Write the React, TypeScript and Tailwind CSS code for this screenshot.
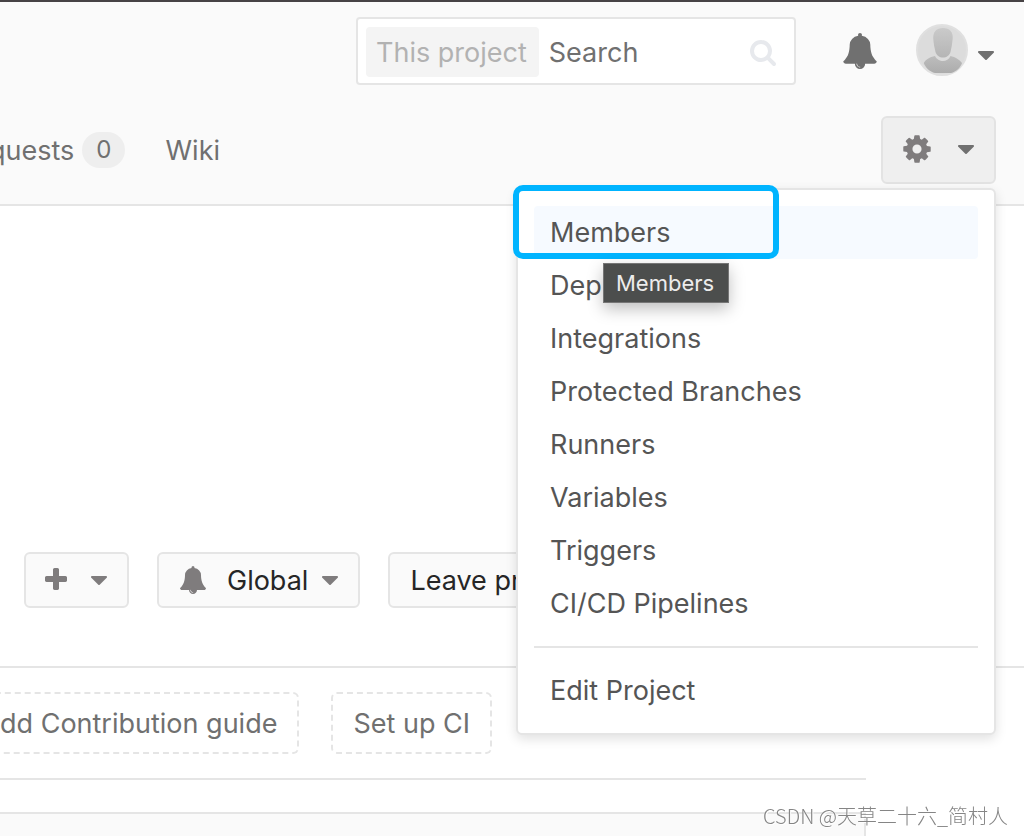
import React from 'react';

const ICONS = {
  bell: 'M912 1696q0-16-16-16-59 0-101.500-42.500t-42.500-101.500q0-16-16-16t-16 16q0 73 51.500 124.500t124.500 51.500q16 0 16-16zm816-288q0 52-38 90t-90 38h-448q0 106-75 181t-181 75-181-75-75-181h-448q-52 0-90-38t-38-90q50-42 91-88t85-119.500 74.500-158.500 50-206 19.500-260q0-152 117-282.500t307-158.500q-8-19-8-39 0-40 28-68t68-28 68 28 28 68q0 20-8 39 190 28 307 158.500t117 282.500q0 139 19.500 260t50 206 74.500 158.500 85 119.500 91 88z',
  cog: 'M1152 896q0-106-75-181t-181-75-181 75-75 181 75 181 181 75 181-75 75-181zm512-109v222q0 12-8 23t-20 13l-185 28q-19 54-39 91 35 50 107 138 10 12 10 25t-9 23q-27 37-99 108t-94 71q-12 0-26-9l-138-108q-44 23-91 38-16 136-29 186-7 28-36 28h-222q-14 0-24.500-8.500t-11.500-21.500l-28-184q-49-16-90-37l-141 107q-10 9-25 9-14 0-25-11-126-114-165-168-7-10-7-23 0-12 8-23 15-21 51-66.500t54-70.500q-27-50-41-99l-183-27q-13-2-21-12.500t-8-23.500v-222q0-12 8-23t19-13l186-28q14-46 39-92-40-57-107-138-10-12-10-24 0-10 9-23 26-36 98.500-107.500t94.500-71.500q13 0 26 10l138 107q44-23 91-38 16-136 29-186 7-28 36-28h222q14 0 24.500 8.500t11.500 21.500l28 184q49 16 90 37l142-107q9-9 24-9 13 0 25 10 129 119 165 170 7 8 7 22 0 12-8 23-15 21-51 66.500t-54 70.500q26 50 41 98l183 28q13 2 21 12.500t8 23.500z',
  caret: 'M1408 704q0 26-19 45l-448 448q-19 19-45 19t-45-19l-448-448q-19-19-19-45t19-45 45-19h896q26 0 45 19t19 45z',
  plus: 'M1600 736v192q0 40-28 68t-68 28h-416v416q0 40-28 68t-68 28h-192q-40 0-68-28t-28-68v-416h-416q-40 0-68-28t-28-68v-192q0-40 28-68t68-28h416v-416q0-40 28-68t68-28h192q40 0 68 28t28 68v416h416q40 0 68 28t28 68z',
  search: 'M1216 832q0-185-131.500-316.500t-316.500-131.500-316.500 131.500-131.500 316.500 131.500 316.500 316.500 131.500 316.500-131.500 131.500-316.500zm512 832q0 52-38 90t-90 38q-54 0-90-38l-343-342q-179 124-399 124-143 0-273.500-55.500t-225-150-150-225-55.500-273.500 55.500-273.500 150-225 225-150 273.500-55.500 273.500 55.500 225 150 150 225 55.500 273.500q0 220-124 399l343 343q37 37 37 90z',
};

const MENU_ITEMS = [
  'Members',
  'Deploy Keys',
  'Integrations',
  'Protected Branches',
  'Runners',
  'Variables',
  'Triggers',
  'CI/CD Pipelines',
];

function Icon({ name, className }: { name: keyof typeof ICONS; className: string }) {
  return (
    <svg viewBox="0 0 1792 1792" fill="currentColor" aria-hidden="true" className={`shrink-0 ${className}`}>
      <path d={ICONS[name]} />
    </svg>
  );
}

function Avatar() {
  return (
    <svg viewBox="0 0 52 52" className="size-[52px]" aria-hidden="true">
      <defs>
        <linearGradient id="head" x1="0" y1="0" x2="0" y2="1">
          <stop offset="0" stopColor="#cacaca" />
          <stop offset="1" stopColor="#b5b5b5" />
        </linearGradient>
        <linearGradient id="body" x1="0" y1="0" x2="0" y2="1">
          <stop offset="0" stopColor="#bdbdbd" />
          <stop offset="1" stopColor="#acacac" />
        </linearGradient>
      </defs>
      <circle cx="26" cy="26" r="25" fill="#dcdcdc" stroke="#e0e0e0" strokeWidth="2" />
      <path
        d="M19 32C14 33 9 36 7.800 39C9 43 14 48 19 49H35C40 48 45 43 46 39C44 36 39 33 34.500 32C33 35.500 30 37 27 37S20.500 35.500 19 32Z"
        fill="url(#body)"
      />
      <path
        d="M27 4C20.500 4 17 8 17.200 14C17.500 19 18.500 24 19.500 28C20.500 31.500 23.500 33.500 27 33.500S33.500 31.500 34.500 28C35.500 24 36.300 19 36.700 14C37 8 33.500 4 27 4Z"
        fill="url(#head)"
      />
    </svg>
  );
}

function SettingsMenu() {
  return (
    <div className="absolute right-0 top-full z-10 mt-1 w-[480px] rounded-md border-2 border-[#e5e5e5] bg-white p-4 shadow-[0_4px_12px_rgba(0,0,0,0.12)]">
      <ul>
        {MENU_ITEMS.map((item, i) => (
          <li key={item}>
            <a
              href="#"
              className={`flex h-[53px] items-center rounded px-4 text-[#555] ${i === 0 ? 'bg-[#f6faff]' : ''}`}
            >
              {item}
            </a>
          </li>
        ))}
      </ul>
      <hr className="my-4 border-t-2 border-[#e5e5e5]" />
      <a href="#" className="flex h-[53px] items-center px-4 text-[#555]">
        Edit Project
      </a>
      <div className="pointer-events-none absolute -left-[5px] -top-[5px] h-[74px] w-[266px] rounded-[10px] border-6 border-[#00b4ff]" />
      <div
        role="tooltip"
        className="absolute left-[85px] top-[73px] flex h-10 w-[126px] items-center border border-[#767676] bg-[#4c4e4d] px-3 text-[22px] text-[#ececec] shadow-[0_6px_16px_rgba(0,0,0,0.25)]"
      >
        Members
      </div>
    </div>
  );
}

export default function App() {
  return (
    <div className="flex min-h-screen flex-col overflow-hidden bg-white font-[Inter,sans-serif] text-[27px] leading-[33px] text-[#707070]">
      <header className="border-b-2 border-t-2 border-b-[#e5e5e5] border-t-[#474345] bg-[#fafafa] pb-5 pr-7 pt-[15px]">
        <div className="flex items-center justify-end">
          <form className="flex h-[68px] w-[440px] items-center rounded border-2 border-[#e5e5e5] bg-white pl-2 pr-[17px] pt-[2px]">
            <span className="flex h-[50px] shrink-0 items-center rounded bg-[#f4f4f4] pl-[10px] pr-3 text-[#b2b2b2]">
              This project
            </span>
            <input
              type="search"
              aria-label="Search"
              placeholder="Search"
              className="min-w-0 flex-1 px-[10px] outline-none placeholder:text-[#707070]"
            />
            <button type="submit" aria-label="Submit search" className="text-[#e7e9ed]">
              <Icon name="search" className="size-7" />
            </button>
          </form>
          <button aria-label="Notifications" className="ml-[46px]">
            <Icon name="bell" className="size-9" />
          </button>
          <button aria-label="Account" className="-mr-1 ml-[38px] flex items-center gap-1 pb-[2px]">
            <Avatar />
            <Icon name="caret" className="mt-[10px] size-7" />
          </button>
        </div>

        <div className="mt-[31px] flex items-center justify-between">
          <nav className="flex w-[220px] items-center justify-end whitespace-nowrap">
            <a href="#" className="flex items-center gap-2">
              Merge Requests
              <span className="flex h-9 items-center rounded-full bg-[#eee] px-[14px] text-2xl">0</span>
            </a>
            <a href="#" className="ml-10">
              Wiki
            </a>
          </nav>
          <div className="relative">
            <button
              aria-label="Settings"
              className="flex h-[68px] w-[115px] items-center justify-between rounded-md border-2 border-[#e3e3e3] bg-[#efefef] pb-[2px] pl-[18px] pr-[14px]"
            >
              <Icon name="cog" className="size-8 text-[#7f7c7d]" />
              <Icon name="caret" className="size-7" />
            </button>
            <SettingsMenu />
          </div>
        </div>
      </header>

      <section className="flex gap-7 whitespace-nowrap border-b-2 border-[#e5e5e5] pb-[58px] pl-6 pt-[346px] text-[#262626]">
        <button
          aria-label="New"
          className="flex h-14 items-center gap-[15px] rounded-md border-2 border-[#e5e5e5] bg-[#fafafa] pl-4 pr-[14px] text-[#7f7c7d]"
        >
          <Icon name="plus" className="size-7" />
          <Icon name="caret" className="size-7" />
        </button>
        <button className="flex h-14 items-center rounded-md border-2 border-[#e5e5e5] bg-[#fafafa] pl-5 pr-[14px]">
          <Icon name="bell" className="mr-5 size-7 text-[#7f7c7d]" />
          Global
          <Icon name="caret" className="ml-2 size-7 text-[#7f7c7d]" />
        </button>
        <button className="h-14 rounded-md border-2 border-[#e5e5e5] bg-[#fafafa] px-5">Leave project</button>
      </section>

      <div className="mr-[158px] flex flex-1 flex-col">
        <div className="border-b-2 border-[#e5e5e5] py-6">
          <div className="flex w-[492px] justify-end gap-8 whitespace-nowrap">
            <a href="#" className="flex h-[62px] items-center rounded-md border-2 border-dashed border-[#e5e5e5] px-5">
              Add Contribution guide
            </a>
            <a href="#" className="flex h-[62px] items-center rounded-md border-2 border-dashed border-[#e5e5e5] px-5">
              Set up CI
            </a>
          </div>
        </div>
        <div className="mt-8 flex-1 border-r-2 border-t-2 border-[#e5e5e5] bg-[#fafafa]" />
      </div>

      <p className="fixed bottom-1 right-4 font-['Noto_Sans_CJK_SC',sans-serif] text-[20px] font-light text-[#858585] [text-shadow:1px_1px_0_#fff]">
        CSDN @天草二十六_简村人
      </p>
    </div>
  );
}
